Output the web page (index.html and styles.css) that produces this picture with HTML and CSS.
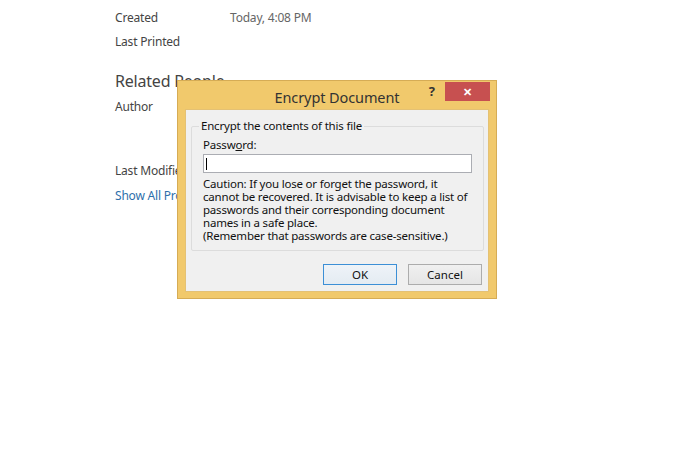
FILE: index.html
```html
<!DOCTYPE html>
<html lang="en">

<head>
    <meta charset="UTF-8">
    <meta name="viewport" content="width=device-width, initial-scale=1.0">
    <title>Info</title>
    <link rel="stylesheet" href="styles.css">
</head>
<body>
    <div class="info">
        <div class="row">
            <span class="label">Created</span>
            <span class="value">Today, 4:08 PM</span>
        </div>
        <div class="row">
            <span class="label">Last Printed</span>
        </div>

        <h2>Related People</h2>
        <div class="row">
            <span class="label">Author</span>
        </div>
        <div class="row spaced">
            <span class="label">Last Modified By</span>
        </div>
        <a class="more" href="#">Show All Properties</a>
    </div>

    <div class="dialog">
        <div class="titlebar">
            <span class="title">Encrypt Document</span>
            <span class="help">?</span>
            <span class="close">&#x2715;</span>
        </div>
        <div class="client">
            <fieldset>
                <legend>Encrypt the contents of this file</legend>
                <label for="password">Passw<u>o</u>rd:</label>
                <div class="input" id="password"><span class="caret"></span></div>
                <p class="caution">Caution: If you lose or forget the password, it cannot be recovered. It is advisable to keep a list of passwords and their corresponding document names in a safe place.<br>(Remember that passwords are case-sensitive.)</p>
            </fieldset>
            <div class="buttons">
                <button class="default">OK</button>
                <button>Cancel</button>
            </div>
        </div>
    </div>
</body>

</html>
```

FILE: styles.css
```css
body {
    font-family: "Noto Sans", "Open Sans", sans-serif;
    background-color: #fff;
    margin: 0;
    padding: 0;
    color: #444;
}

.info {
    padding: 5px 0 0 115px;
    font-size: 12px;
    letter-spacing: -0.2px;
}

.row {
    display: flex;
    height: 24px;
    align-items: center;
}

.row .label {
    width: 115px;
}

.row .value {
    color: #666;
}

.row.spaced {
    margin-top: 40px;
}

h2 {
    font-weight: normal;
    font-size: 16px;
    margin: 16px 0 0;
    height: 25px;
    line-height: 25px;
    color: #444;
}

.more {
    display: block;
    margin-top: 2px;
    color: #2e6fab;
    text-decoration: none;
    line-height: 24px;
}

/* dialog */
.dialog {
    position: absolute;
    left: 177px;
    top: 80px;
    width: 320px;
    height: 219px;
    box-sizing: border-box;
    background-color: #f1c96c;
    border: 1px solid #d6ac55;
    padding: 0 7px 6px 7px;
    display: flex;
    flex-direction: column;
    font-family: "Noto Sans", "Open Sans", sans-serif;
}

.titlebar {
    height: 28px;
    position: relative;
    display: flex;
    justify-content: center;
    align-items: center;
}

.title {
    font-size: 14.5px;
    color: #333;
    margin-top: 3px;
    letter-spacing: -0.1px;
}

.help {
    position: absolute;
    right: 54px;
    top: 1px;
    font-weight: bold;
    font-size: 13px;
    color: #333;
}

.close {
    position: absolute;
    right: -1px;
    top: 1px;
    width: 45px;
    height: 19px;
    background-color: #c75050;
    color: #fff;
    font-size: 11px;
    font-weight: bold;
    display: flex;
    align-items: center;
    justify-content: center;
}

.client {
    flex: 1;
    background-color: #f0f0f0;
    border: 1px solid #e4c174;
    padding: 0 6px 0 5px;
    display: flex;
    flex-direction: column;
    font-size: 11.5px;
    letter-spacing: -0.2px;
    color: #111;
}

fieldset {
    margin: 9px 0 0;
    padding: 4px 11px 8px 11px;
    border: 1px solid #dcdcdc;
    border-radius: 2px;
    height: 132px;
    box-sizing: border-box;
}

legend {
    padding: 0 2px;
    margin-left: -4px;
    line-height: 14px;
}

label {
    display: block;
    line-height: 14px;
    margin-top: 1px;
}

.input {
    margin-top: 2px;
    height: 19px;
    box-sizing: border-box;
    border: 1px solid #abadb3;
    background-color: #fff;
    width: 269px;
    position: relative;
}

.caret {
    position: absolute;
    left: 2px;
    top: 3px;
    width: 1px;
    height: 12px;
    background-color: #000;
}

.caution {
    margin: 4px 0 0;
    line-height: 13px;
}

.buttons {
    display: flex;
    justify-content: flex-end;
    gap: 11px;
    margin-top: 13px;
}

button {
    width: 74px;
    height: 21px;
    font-family: inherit;
    font-size: 11.5px;
    color: #111;
    background: linear-gradient(#f0f0f0, #e5e5e5);
    border: 1px solid #acacac;
    padding: 0;
}

button.default {
    border-color: #3c8fd6;
    background: linear-gradient(#eef3f8, #e4ebf2);
}
```
